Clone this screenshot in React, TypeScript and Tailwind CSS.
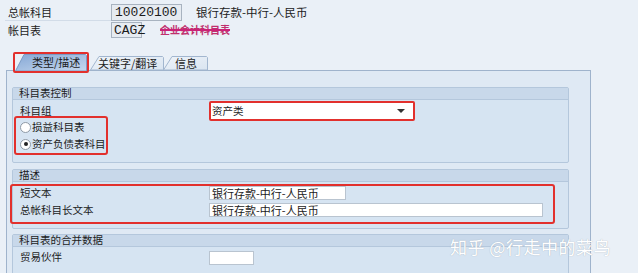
import React from 'react';

type TabProps = {
  label: string;
  width: number;
  height: number;
  active?: boolean;
  textClass?: string;
};

function Tab({ label, width, height, active = false, textClass = '' }: TabProps) {
  const slant = 9;
  return (
    <div className="relative flex items-center" style={{ width, height }}>
      <svg className="absolute inset-0" width={width} height={height}>
        <defs>
          <linearGradient id={`tg-${label}`} x1="0" y1="0" x2="1" y2="1">
            <stop offset="0" stopColor={active ? '#86a8d6' : '#eef3f9'} />
            <stop offset="1" stopColor={active ? '#c6d8ee' : '#dae5f1'} />
          </linearGradient>
        </defs>
        <polygon
          points={`${slant},0.5 ${width - 1.5},0.5 ${width - 0.5},1.5 ${width - 0.5},${height} 0.5,${height} `}
          fill={`url(#tg-${label})`}
          stroke={active ? '#7b9bc5' : '#a2b6cf'}
          strokeWidth="1"
        />
      </svg>
      <span className={`relative leading-none ${textClass}`}>{label}</span>
    </div>
  );
}

function Group({ title, children, bodyClass = '' }: { title: string; children: React.ReactNode; bodyClass?: string }) {
  return (
    <div className="w-[557px] rounded-[2px] border border-[#b4c7dc] bg-[#d6e4f2]">
      <div className="flex h-[12px] items-center border-b border-[#b4c7dc] bg-[#c8d8ea] pl-[6px] leading-none">{title}</div>
      <div className={bodyClass}>{children}</div>
    </div>
  );
}

function Radio({ checked = false }: { checked?: boolean }) {
  return (
    <span className="flex h-[11px] w-[11px] shrink-0 items-center justify-center rounded-full border border-[#8f9aa6] bg-white">
      {checked && <span className="h-[4px] w-[4px] rounded-full bg-[#222]" />}
    </span>
  );
}

export default function App() {
  return (
    <div className="relative h-[273px] w-[638px] overflow-hidden bg-[#eaf0f7] text-[10.5px] text-[#1c1c1c] font-['Noto_Sans_CJK_SC','Noto_Sans',sans-serif]">
      {/* header fields */}
      <div className="flex flex-col pt-[4px] text-[11px]">
        <div className="flex h-[18px] items-start">
          <div className="ml-[5px] flex h-[17px] w-[106px] items-center border-b border-[#d2dce8] pl-[3px] leading-none">总帐科目</div>
          <div className="flex h-[17px] w-[71px] items-center border border-[#a8b3c0] bg-[#e6ebf1] pl-[3px] font-['Liberation_Mono',monospace] text-[13px] leading-none">10020100</div>
          <span className="ml-[14px] mt-[3px] text-[11.5px] leading-none">银行存款-中行-人民币</span>
        </div>
        <div className="flex h-[18px] items-start">
          <div className="ml-[5px] flex h-[16px] w-[106px] items-center pl-[3px] leading-none">帐目表</div>
          <div className="flex h-[16px] w-[31px] items-center border border-[#a8b3c0] bg-[#e6ebf1] pl-[2px] font-['Liberation_Mono',monospace] text-[13px] leading-none">CAGZ</div>
          <span className="ml-[18px] mt-[3px] text-[10px] font-bold leading-none text-[#c0306e] line-through decoration-[#cc2277] decoration-2">企业会计科目表</span>
        </div>
      </div>

      {/* tab strip */}
      <div className="relative z-10 mt-[12px] flex h-[18px] items-start pl-[13px] text-[11px]">
        <div className="h-[21px] w-[76px] rounded-[2px] border-2 border-[#e2302d] bg-[#eaf0f7]">
          <Tab label="类型/描述" width={72} height={17} active textClass="ml-[17px]" />
        </div>
        <div className="ml-[1px] mt-[4px]">
          <Tab label="关键字/翻译" width={74} height={14} textClass="ml-[8px]" />
        </div>
        <div className="-ml-[1px] mt-[4px]">
          <Tab label="信息" width={45} height={14} textClass="ml-[12px]" />
        </div>
      </div>

      {/* main panel */}
      <div className="ml-[6px] h-[220px] w-[585px] border border-b-0 border-[#9fb3cc] bg-[#dfe9f4] pl-[5px] pt-[16px]">
        <Group title="科目表控制" bodyClass="h-[62px] pt-[1px]">
          <div className="flex h-[20px] items-center">
            <div className="w-[196px] pl-[7px] leading-none">科目组</div>
            <div className="flex h-[20px] w-[206px] items-center justify-between rounded-[2px] border-2 border-[#e2302d] bg-white pl-[1px] pr-[8px] leading-none">
              <span>资产类</span>
              <span className="h-0 w-0 border-x-[4px] border-t-[4px] border-x-transparent border-t-[#333]" />
            </div>
          </div>
          <div className="relative z-10 -mt-[5px] ml-[1px] flex h-[39px] w-[94px] flex-col justify-center gap-[6px] rounded-[3px] border-2 border-[#e2302d] pl-[4px]">
            <div className="flex items-center gap-[1px] leading-none">
              <Radio />
              <span className="whitespace-nowrap">损益科目表</span>
            </div>
            <div className="flex items-center gap-[1px] leading-none">
              <Radio checked />
              <span className="whitespace-nowrap">资产负债表科目</span>
            </div>
          </div>
        </Group>

        <div className="mt-[6px]">
          <Group title="描述" bodyClass="h-[46px] pt-[2px]">
            <div className="-ml-[3px] flex w-[545px] flex-col gap-[3px] rounded-[3px] border-2 border-[#e2302d] pt-0 pb-[5px]">
              <div className="flex h-[14px] items-center">
                <div className="w-[197px] pl-[8px] leading-none">短文本</div>
                <div className="flex h-[14px] w-[137px] items-center border border-[#b9c4d0] bg-white pl-[2px] text-[11px] leading-none">银行存款-中行-人民币</div>
              </div>
              <div className="flex h-[14px] items-center">
                <div className="w-[197px] pl-[8px] leading-none">总帐科目长文本</div>
                <div className="flex h-[14px] w-[334px] items-center border border-[#b9c4d0] bg-white pl-[2px] text-[11px] leading-none">银行存款-中行-人民币</div>
              </div>
            </div>
          </Group>
        </div>

        <div className="mt-[5px]">
          <Group title="科目表的合并数据" bodyClass="h-[40px] pt-[4px]">
            <div className="flex h-[13px] items-center">
              <div className="w-[196px] pl-[7px] leading-none">贸易伙伴</div>
              <div className="h-[14px] w-[45px] border border-[#b9c4d0] bg-white" />
            </div>
          </Group>
        </div>
      </div>

      {/* watermark */}
      <div className="absolute left-[450px] top-[238px] text-[17px] leading-none tracking-[0.5px] text-white [text-shadow:0_0_1px_#9aa6b3]">
        知乎 @行走中的菜鸟
      </div>
    </div>
  );
}
